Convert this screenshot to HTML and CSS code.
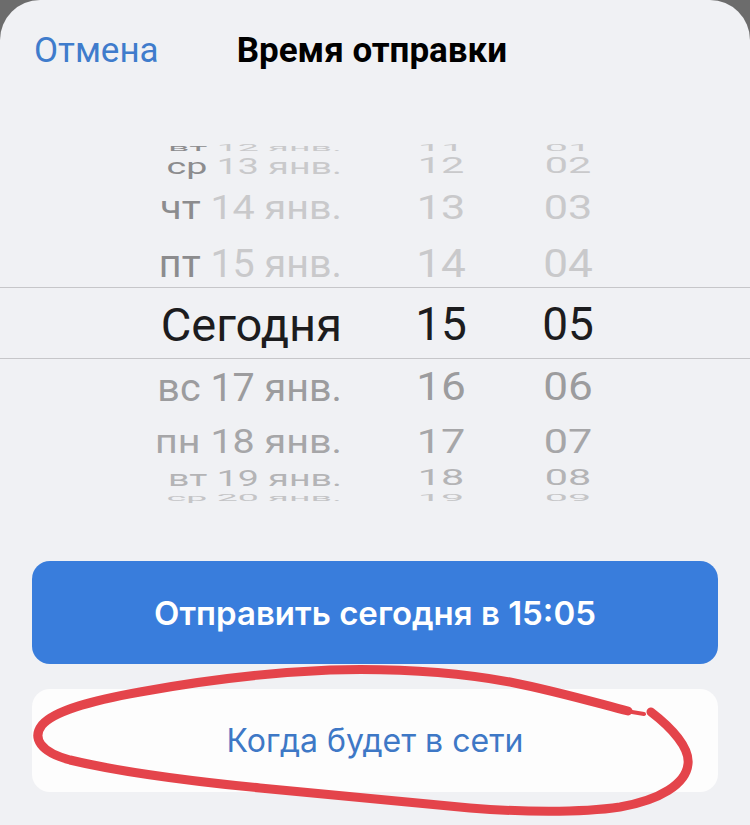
FILE: index.html
```html
<!DOCTYPE html>
<html lang="ru">
<head>
    <meta charset="UTF-8">
    <meta name="viewport" content="width=device-width, initial-scale=1.0">
    <title>Время отправки</title>
    <link rel="stylesheet" href="styles.css">
</head>
<body>
    <div class="sheet">
        <div class="header">
            <span class="cancel">Отмена</span>
            <span class="title">Время отправки</span>
        </div>

        <div class="picker">
            <div class="row far-4 past"><span class="day"><b>вт</b> 12 янв.</span><span class="num">11</span><span class="num">01</span></div>
            <div class="row far-3 past"><span class="day"><b>ср</b> 13 янв.</span><span class="num">12</span><span class="num">02</span></div>
            <div class="row far-2 past"><span class="day"><b>чт</b> 14 янв.</span><span class="num">13</span><span class="num">03</span></div>
            <div class="row far-1 past"><span class="day"><b>пт</b> 15 янв.</span><span class="num">14</span><span class="num">04</span></div>
            <div class="row selected"><span class="day">Сегодня</span><span class="num">15</span><span class="num">05</span></div>
            <div class="row near-1"><span class="day">вс 17 янв.</span><span class="num">16</span><span class="num">06</span></div>
            <div class="row near-2"><span class="day">пн 18 янв.</span><span class="num">17</span><span class="num">07</span></div>
            <div class="row near-3"><span class="day">вт 19 янв.</span><span class="num">18</span><span class="num">08</span></div>
            <div class="row near-4"><span class="day">ср 20 янв.</span><span class="num">19</span><span class="num">09</span></div>
        </div>

        <div class="actions">
            <button class="btn btn-primary">Отправить сегодня в 15:05</button>
            <button class="btn btn-plain">Когда будет в сети</button>
        </div>

        <!-- hand-drawn marker around the second button -->
        <svg class="scribble" viewBox="0 0 750 825" width="750" height="825">
            <path d="M651 712 C 672 728, 690 748, 688 764 C 686 784, 660 800, 620 807 C 580 813, 520 812, 470 808 C 400 802, 330 795, 260 788 C 190 781, 120 772, 70 760 C 40 752, 32 738, 42 725 C 55 710, 95 700, 140 692 C 200 681, 260 673, 330 670 C 400 668, 460 673, 510 682 C 560 692, 600 704, 628 711"
                  fill="none" stroke="#e4444b" stroke-width="9" stroke-linecap="round"/>
            <path d="M626 711 L 644 714" fill="none" stroke="#e4444b" stroke-width="4" stroke-linecap="round"/>
        </svg>
    </div>
</body>
</html>
```

FILE: styles.css
```css
body {
    margin: 0;
    background: #6c6c6c;
    font-family: Roboto, "Liberation Sans", sans-serif;
}

.sheet {
    position: relative;
    width: 750px;
    height: 825px;
    background: #f0f1f4;
    border-radius: 40px 40px 0 0;
    overflow: hidden;
}

.header {
    display: flex;
    align-items: center;
    padding: 28px 34px 0;
    height: 44px;
    font-size: 35px;
}

.cancel {
    color: #3f7ccc;
}

.title {
    margin-left: 78px;
    font-weight: 700;
    color: #000;
}

/* date / hour / minute wheel */
.picker {
    margin-top: 66px;
    height: 368px;
    overflow: hidden;
    font-size: 46px;
}

.row {
    display: flex;
    align-items: center;
    white-space: nowrap;
    color: #9c9c9e;
}

.row span {
    flex: none;
    text-align: center;
}

.row .day {
    width: 342px;
    font-size: 47px;
    text-align: right;
    transform-origin: right center;
}

.row .num:nth-child(2) {
    width: 198px;
}

.row .num:nth-child(3) {
    width: 56px;
}

.row b {
    font-weight: 400;
}

.past {
    color: #c9c9cb;
}

.past b {
    color: #8c8c8e;
}

.far-4 { height: 20px; }
.far-3 { height: 16px; }
.far-2 { height: 66px; }
.far-1 { height: 47px; }

.far-4 span, .near-4 span { transform: scale(0.9, 0.18); }
.far-3 span, .near-3 span { transform: scale(0.9, 0.46); }
.far-2 span, .near-2 span { transform: scale(0.94, 0.72); }
.far-1 span, .near-1 span { transform: scale(0.96, 0.84); }

.far-4 .day, .near-4 .day { transform: scale(0.8, 0.18); }
.far-3 .day, .near-3 .day { transform: scale(0.8, 0.46); }
.far-2 .day, .near-2 .day { transform: scale(0.84, 0.72); }
.far-1 .day, .near-1 .day { transform: scale(0.84, 0.84); }

.selected {
    height: 68px;
    padding-top: 2px;
    border-top: 1.5px solid #c6c6c9;
    border-bottom: 1.5px solid #c6c6c9;
    color: #1c1c1e;
}

.near-1 { height: 56px; }
.near-2 { height: 52px; color: #a6a6a8; }
.near-3 { height: 22px; color: #b4b4b6; }
.near-4 { height: 18px; color: #c4c4c6; }

.actions {
    display: flex;
    flex-direction: column;
    gap: 25px;
    margin: 55px 32px 0;
}

.btn {
    height: 103px;
    border: none;
    border-radius: 18px;
    font-family: Inter, Roboto, sans-serif;
    font-size: 32px;
}

.btn-primary {
    background: #397ddc;
    color: #fff;
    font-weight: 600;
    font-size: 33px;
}

.btn-plain {
    background: #fdfdfd;
    color: #3e78c6;
}

.scribble {
    position: absolute;
    top: 0;
    left: 0;
    pointer-events: none;
}
```
